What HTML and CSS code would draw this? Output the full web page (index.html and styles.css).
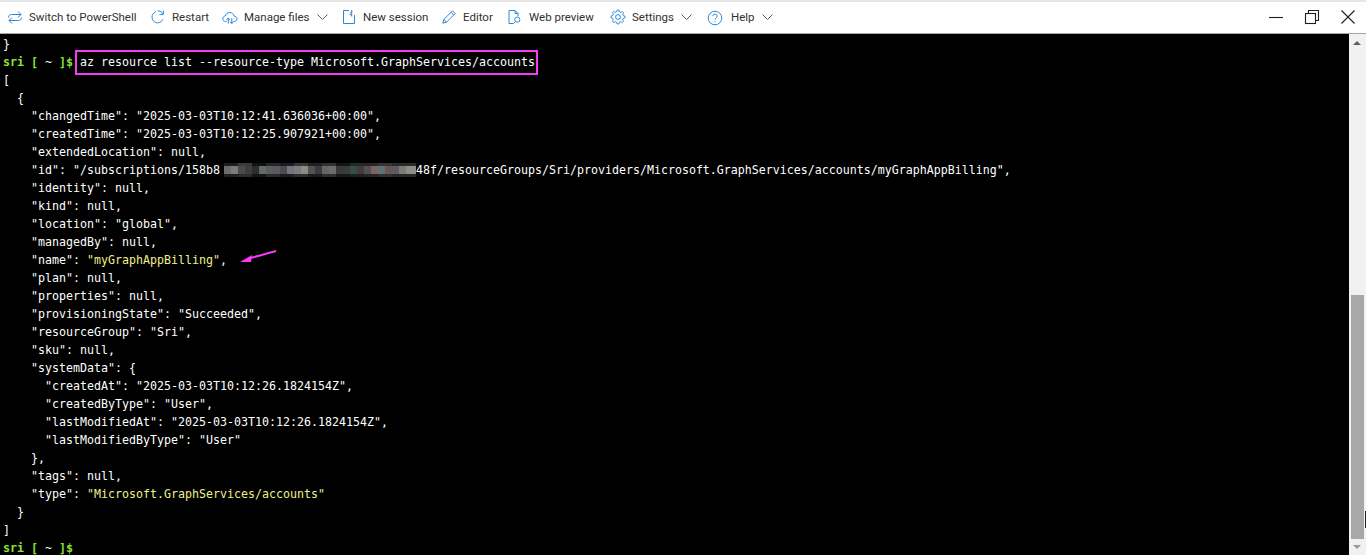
FILE: index.html
```html
<!DOCTYPE html>
<html lang="en">
<head>
<meta charset="utf-8">
<title>Cloud Shell</title>
<link rel="stylesheet" href="styles.css">
</head>
<body>
<header class="toolbar">
  <div class="item w-switch">
    <svg class="icon" viewBox="0 0 14 14"><path d="M0.5 7.5C0.8 5.2 2 4.5 3.5 4.5H13M10 1.5L13 4.5L10 7.5M13.5 7.5C13.2 9.8 12 10.5 10.5 10.5H1M4 7.5L1 10.5L4 13.5"/></svg>
    <span>Switch to PowerShell</span>
  </div>
  <div class="item w-restart">
    <svg class="icon" viewBox="0 0 14 14"><path d="M5 1.5C2.5 2.6 1 4.8 1 7.2C1 10.3 3.5 12.8 6.6 12.8C9 12.8 11 11.4 12 9.2M6.5 0.8C9 0.8 11 2 12 3.9M12.4 0.6V4.4H8.6"/></svg>
    <span>Restart</span>
  </div>
  <div class="item w-manage">
    <svg class="icon" viewBox="0 0 14 14"><path d="M3.5 11.5H2.6C1 11.5 -0.2 10.2 -0.2 8.7C-0.2 7.2 1 6 2.4 6C2.8 3.9 4.6 2.5 6.7 2.5C8.9 2.5 10.7 4 11.1 6.1C12.7 6.2 14 7.3 14 8.8C14 10.3 12.8 11.5 11.2 11.5H10.5M5.3 13.5V8.2M3.4 10L5.3 8.2L7.2 10M8.8 8.2V13.5M6.9 11.7L8.8 13.5L10.7 11.7"/></svg>
    <span>Manage files</span>
    <svg class="chev" viewBox="0 0 11 6"><path d="M0.5 0.5L5.5 5.5L10.5 0.5"/></svg>
  </div>
  <div class="item w-new">
    <svg class="icon" viewBox="0 0 14 14"><path d="M7 0.5H1.5V13.5H12.5V5M8 3.5L10 1.5M9.7 0V6.5M7.5 4.7H10"/></svg>
    <span>New session</span>
  </div>
  <div class="item w-editor">
    <svg class="icon" viewBox="0 0 14 14"><path d="M10.5 0.8L13.2 3.5L4.5 12.2L0.8 13.2L1.8 9.5ZM9 2.3L11.7 5M1.8 9.5L4.5 12.2"/></svg>
    <span>Editor</span>
  </div>
  <div class="item w-web">
    <svg class="icon" viewBox="0 0 14 14"><path d="M5.5 13.5H1V0.5H7L10 3.5V6M7 0.5V3.5H10"/><circle cx="9.3" cy="9.6" r="2.6"/><path d="M7.5 11.5L5.6 13.4"/></svg>
    <span>Web preview</span>
  </div>
  <div class="item w-settings">
    <svg class="icon" viewBox="-7 -7 14 14"><polygon points="2.69,-4.67 4.24,-5.52 5.52,-4.24 4.67,-2.69 5.2,-1.4 6.9,-0.9 6.9,0.9 5.2,1.4 4.67,2.69 5.52,4.24 4.24,5.52 2.69,4.67 1.4,5.2 0.9,6.9 -0.9,6.9 -1.4,5.2 -2.69,4.67 -4.24,5.52 -5.52,4.24 -4.67,2.69 -5.2,1.4 -6.9,0.9 -6.9,-0.9 -5.2,-1.4 -4.67,-2.69 -5.52,-4.24 -4.24,-5.52 -2.69,-4.67 -1.4,-5.2 -0.9,-6.9 0.9,-6.9 1.4,-5.2"/><circle cx="0" cy="0" r="2.4"/></svg>
    <span>Settings</span>
    <svg class="chev" viewBox="0 0 11 6"><path d="M0.5 0.5L5.5 5.5L10.5 0.5"/></svg>
  </div>
  <div class="item">
    <svg class="icon help" viewBox="0 0 14 14"><circle cx="7" cy="7" r="6.8"/><path d="M4.8 5.2C4.8 3.9 5.8 3.1 7 3.1C8.2 3.1 9.2 3.9 9.2 5.1C9.2 6.7 7 6.8 7 8.6M7 10V11"/></svg>
    <span>Help</span>
    <svg class="chev" viewBox="0 0 11 6"><path d="M0.5 0.5L5.5 5.5L10.5 0.5"/></svg>
  </div>
  <div class="winctl">
    <svg class="win" viewBox="0 0 14 14"><path d="M0 7.5H14"/></svg>
    <svg class="win" viewBox="0 0 14 14"><path d="M3.5 3.5V0.5H13.5V10.5H10.5"/><rect x="0.5" y="3.5" width="10" height="10"/></svg>
    <svg class="win" viewBox="0 0 14 14"><path d="M0.5 0.5L13.5 13.5M13.5 0.5L0.5 13.5"/></svg>
  </div>
</header>
<main class="shell">
<pre class="term">}
<span class="g">sri [</span> ~ <span class="g">]$</span> <span class="cmd">az resource list --resource-type Microsoft.GraphServices/accounts</span>
[
  {
    "changedTime": "2025-03-03T10:12:41.636036+00:00",
    "createdTime": "2025-03-03T10:12:25.907921+00:00",
    "extendedLocation": null,
    "id": "/subscriptions/158b8<span class="mosaic"></span>48f/resourceGroups/Sri/providers/Microsoft.GraphServices/accounts/myGraphAppBilling",
    "identity": null,
    "kind": null,
    "location": "global",
    "managedBy": null,
    "name": <span class="y">"myGraphAppBilling"</span>,<svg class="arrow" viewBox="0 0 36 14"><path d="M35 1L8 8.5"/><path class="head" d="M-1 12L11 5L10 12Z"/></svg>
    "plan": null,
    "properties": null,
    "provisioningState": "Succeeded",
    "resourceGroup": "Sri",
    "sku": null,
    "systemData": {
      "createdAt": "2025-03-03T10:12:26.1824154Z",
      "createdByType": "User",
      "lastModifiedAt": "2025-03-03T10:12:26.1824154Z",
      "lastModifiedByType": "User"
    },
    "tags": null,
    "type": <span class="y">"Microsoft.GraphServices/accounts"</span>
  }
]
<span class="g">sri [</span> ~ <span class="g">]$</span></pre>
<aside class="scrollbar">
  <span class="tri up"></span>
  <div class="thumb"></div>
  <span class="tri down"></span>
  <i class="cursor"></i>
</aside>
</main>
</body>
</html>
```
FILE: styles.css
```css
* { box-sizing: border-box; }
html, body { margin: 0; height: 555px; overflow: hidden; background: #000; }
body { display: flex; flex-direction: column; }

.toolbar {
  flex: 0 0 34px;
  display: flex;
  align-items: center;
  padding: 0 0 1px 8px;
  background: #fff;
  border-top: 2px solid #e6e6e6;
  border-bottom: 1px solid #a6a6a6;
  font: 11.5px/16px Roboto, "Open Sans", sans-serif;
  color: #323130;
}
.item { display: flex; align-items: center; gap: 7px; flex: none; }
.w-switch { width: 143px; }
.w-restart { width: 72px; }
.w-manage { width: 119px; }
.w-new { width: 100px; }
.w-editor { width: 66px; }
.w-web { width: 103px; }
.w-settings { width: 97px; }
.icon { width: 14px; height: 14px; flex: none; overflow: visible; }
.icon path, .icon circle, .icon polygon, .icon rect { fill: none; stroke: #2b88d8; stroke-width: 1; }
.icon.help { margin: 2px 2px 0 0; }
.chev { width: 11px; height: 6px; flex: none; overflow: visible; }
.chev path { fill: none; stroke: #605e5c; stroke-width: 1; }
.winctl { display: flex; gap: 22px; margin-left: auto; padding-right: 11px; }
.win { width: 14px; height: 14px; overflow: visible; }
.win path, .win rect { fill: none; stroke: #1f1f1f; stroke-width: 1.1; }

.shell { flex: 1; display: flex; min-height: 0; }
.term {
  flex: 1;
  min-width: 0;
  margin: 0;
  padding: 1px 0 0 3px;
  overflow: hidden;
  position: relative;
  background: #000;
  color: #fff;
  font: 11.63px/18px "DejaVu Sans Mono", "Liberation Mono", monospace;
}
.g { color: #8ae234; font-weight: 700; }
.y { color: #f0f08c; }
.cmd { position: relative; display: inline-block; vertical-align: top; }
.cmd::after {
  content: "";
  position: absolute;
  left: -5px;
  right: -3px;
  top: -3px;
  bottom: -4px;
  border: 2px solid #f53cf0;
}
.mosaic {
  display: inline-block;
  width: 28ch;
  height: 14px;
  vertical-align: -3px;
  background-color: #000;
  background-repeat: no-repeat;
  background-position: 4px 3px, 4px 0, 4px 11px;
  background-size: 192px 8px, 192px 3px, 192px 3px;
  background-image:
    linear-gradient(90deg,
      #6a6c6a 0 7px, #7a7c78 0 14px, #4a4c4a 0 21px, #3c3e3c 0 28px, #2c2e2c 0 35px, #666a64 0 42px,
      #5c605c 0 49px, #585c5c 0 56px, #4a4c50 0 63px, #74747a 0 70px, #7c7c7e 0 77px, #8a8c86 0 84px,
      #505450 0 91px, #3a3a40 0 98px, #666668 0 105px, #6c6e6a 0 112px, #383a36 0 119px, #3a3c38 0 126px,
      #3a4c4a 0 133px, #483838 0 140px, #505058 0 147px, #7a6660 0 154px, #607078 0 161px, #6a5650 0 168px,
      #5c5c60 0 175px, #7a7c7a 0 182px, #8c8e88 0 192px),
    linear-gradient(90deg,
      #1e1e1e 0 14px, #3a3a3a 0 28px, #121212 0 42px, #262626 0 56px, #1c1c20 0 70px, #363638 0 84px,
      #202020 0 98px, #303032 0 112px, #141414 0 126px, #1c2c2c 0 140px, #2a2424 0 154px, #343438 0 168px,
      #2a2a2a 0 192px),
    linear-gradient(90deg,
      #202020 0 14px, #2c2c2c 0 28px, #161616 0 42px, #2a2a2a 0 56px, #1e1e20 0 70px, #2e2e30 0 84px,
      #1c1c1c 0 98px, #2e2e2e 0 112px, #181818 0 126px, #182424 0 140px, #282222 0 154px, #303034 0 168px,
      #262626 0 192px);
}
.arrow {
  position: absolute;
  left: 241px;
  top: 216px;
  width: 36px;
  height: 14px;
  overflow: visible;
}
.arrow path { fill: none; stroke: #f53cf0; stroke-width: 2; }
.arrow .head { fill: #f53cf0; stroke: none; }

.scrollbar {
  flex: 0 0 17px;
  position: relative;
  display: flex;
  flex-direction: column;
  background: #f1f1f1;
}
.thumb { position: absolute; left: 2px; right: 2px; top: 261px; height: 244px; background: #a8a8a8; }
.tri { position: absolute; left: 4px; width: 0; height: 0; border-left: 4px solid transparent; border-right: 4px solid transparent; }
.tri.up { top: 7px; border-bottom: 4px solid #606060; }
.tri.down { top: 511px; border-top: 4px solid #9a9a9a; }
.cursor { position: absolute; right: 0; top: 477px; width: 1px; height: 17px; background: #222; }
```
